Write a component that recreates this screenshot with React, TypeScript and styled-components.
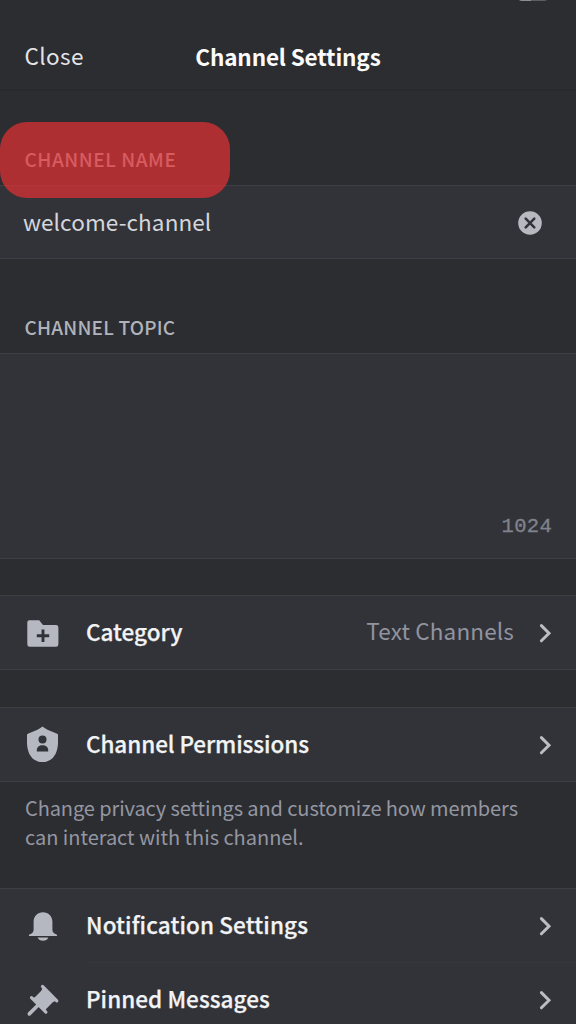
import React from 'react';
import styled, { createGlobalStyle } from 'styled-components';

const Global = createGlobalStyle`
  html, body { margin: 0; padding: 0; background: #2c2d31; }
  body { overflow: hidden; }
  * { box-sizing: border-box; }
`;

const Screen = styled.main`
  position: relative;
  width: 576px;
  height: 1024px;
  overflow: hidden;
  display: flex;
  flex-direction: column;
  background: #2c2d31;
  color: #f2f3f5;
  font-family: 'Noto Sans CJK SC', 'Noto Sans', sans-serif;
  font-size: 22px;
`;

const Header = styled.header`
  flex: none;
  height: 91px;
  padding: 38px 24px 0;
  display: grid;
  grid-template-columns: 1fr auto 1fr;
  align-items: start;
  border-bottom: 2px solid #28292c;
`;

const StatusPill = styled.div`
  position: absolute;
  top: -9px;
  left: 518px;
  width: 30px;
  height: 10px;
  border-radius: 4px;
  background: linear-gradient(90deg, #8d8e91 45%, #5d5e61 45%);
`;

const CloseButton = styled.button`
  all: unset;
  padding-left: 0.5px;
  margin-top: -1px;
  font-size: 22.5px;
  line-height: 36px;
  letter-spacing: 0.4px;
  color: #e3e4e8;
`;

const Title = styled.h1`
  margin: 0;
  font-size: 22.5px;
  font-weight: 700;
  letter-spacing: -0.15px;
  line-height: 36px;
  color: #fbfbfc;
`;

const SectionLabel = styled.h2<{ $height: number; $spacing?: number }>`
  flex: none;
  margin: 0;
  height: ${p => p.$height}px;
  padding: 0 24.5px 11px;
  display: flex;
  align-items: flex-end;
  font-size: 19px;
  line-height: 30px;
  font-weight: 500;
  letter-spacing: ${p => p.$spacing ?? 0}px;
  color: #b0b3bb;
`;

const Highlight = styled.div`
  position: absolute;
  left: 0;
  top: 122px;
  width: 230px;
  height: 76px;
  border-radius: 27px;
  background: rgba(235, 48, 51, 0.68);
`;

const Panel = styled.section<{ $height: number }>`
  flex: none;
  height: ${p => p.$height}px;
  background: #323338;
  border-top: 1px solid #3d3e43;
  border-bottom: 1px solid #3d3e43;
`;

const NameField = styled.div`
  display: flex;
  align-items: center;
  justify-content: space-between;
  height: 73px;
  padding: 0 34px 0 23px;
`;

const Value = styled.span`
  font-size: 22.5px;
  line-height: 34px;
  padding-bottom: 3px;
  letter-spacing: 0.1px;
  color: #d4d6dc;
`;

const Counter = styled.div`
  height: 100%;
  display: flex;
  align-items: flex-end;
  justify-content: flex-end;
  padding: 0 24px 18px;
  font-family: 'Liberation Mono', monospace;
  font-size: 20.5px;
  line-height: 26px;
  letter-spacing: 0.3px;
  color: #80838b;
  -webkit-text-stroke: 0.3px #80838b;
`;

const Gap = styled.div<{ $size: number }>`
  flex: none;
  height: ${p => p.$size}px;
`;

const RowBox = styled.div`
  height: 73px;
  padding: 0 24px 0 26px;
  display: grid;
  grid-template-columns: 34px 1fr auto 13px;
  align-items: center;
`;

const RowLabel = styled.span<{ $spacing: number }>`
  margin-left: 26px;
  padding-bottom: 4px;
  font-weight: 500;
  font-size: 22.5px;
  line-height: 34px;
  letter-spacing: ${p => p.$spacing}px;
  white-space: nowrap;
  -webkit-text-stroke: 0.25px currentColor;
`;

const RowValue = styled.span`
  margin-right: 25px;
  padding-bottom: 5px;
  font-size: 22.5px;
  line-height: 34px;
  letter-spacing: 0.15px;
  color: #9194a0;
`;

const Divider = styled.div`
  height: 1px;
  margin-left: 86px;
  background: #36373c;
`;

const Help = styled.p`
  flex: none;
  margin: 0;
  height: 106px;
  padding: 12px 25px 0;
  font-size: 20px;
  line-height: 28.5px;
  color: #9497a2;
  white-space: nowrap;
`;

const HelpLine = styled.span<{ $spacing: number }>`
  display: block;
  letter-spacing: ${p => p.$spacing}px;
`;

const FILL = '#b5b8c0';
const PANEL = '#323338';

const ClearIcon = () => (
  <svg width="24" height="24" viewBox="0 0 24 24">
    <circle cx="12" cy="12" r="11.8" fill="#b7b8c0" />
    <path d="M7.7 7.7l8.6 8.6M16.3 7.7l-8.6 8.6" stroke={PANEL} strokeWidth="2.5" strokeLinecap="round" />
  </svg>
);

const Chevron = () => (
  <svg width="13" height="20" viewBox="0 0 13 20">
    <path d="M2.4 2.6L10 10.2L2.4 17.8" fill="none" stroke="#bcbdc3" strokeWidth="3" strokeLinecap="round" />
  </svg>
);

const FolderIcon = () => (
  <svg width="34" height="36" viewBox="0 0 34 36">
    <path d="M3.3 4.5H13.2L17 9.2H30Q32.4 9.2 32.4 11.6V28.5Q32.4 31 30 31H3.7Q1.3 31 1.3 28.5V6.5Q1.3 4.5 3.3 4.5Z" transform="translate(0 0.8)" fill={FILL} />
    <path d="M17 14.6V27M10.8 20.8H23.2" stroke={PANEL} strokeWidth="2.9" />
  </svg>
);

const ShieldIcon = () => (
  <svg width="34" height="38" viewBox="0 0 34 38">
    <g transform="translate(0 -0.6)">
      <path d="M16.5 1.2Q18.2 2.8 21.5 4.3L31.2 8.3Q32 8.7 32 9.6V17C32 26.5 27.5 36.6 16.5 36.6S1 26.5 1 17V9.6Q1 8.7 1.8 8.3L11.5 4.3Q14.8 2.8 16.5 1.2Z" fill={FILL} />
      <circle cx="16.5" cy="14" r="4" fill={PANEL} />
      <path d="M10.8 26V24.6C10.8 21.5 13.3 19.8 16.5 19.8S22.2 21.5 22.2 24.6V26Z" fill={PANEL} />
    </g>
  </svg>
);

const BellIcon = () => (
  <svg width="34" height="34" viewBox="0 0 34 34">
    <path d="M17 3.2C22.4 3.2 26.4 7.2 26.4 12.6V21Q26.4 23.4 28.4 24.5L30.6 25.6Q31.4 26.2 31 27.1H3Q2.6 26.2 3.4 25.6L5.6 24.5Q7.6 23.4 7.6 21V12.6C7.6 7.2 11.6 3.2 17 3.2Z" fill={FILL} />
    <path d="M11.6 28.4H22.4Q20.9 31.7 17 31.7T11.6 28.4Z" fill={FILL} />
  </svg>
);

const PinIcon = () => (
  <svg width="34" height="34" viewBox="0 0 34 34">
    <g transform="translate(-0.5 -0.5)">
      <path d="M17 4L31.3 18.3" stroke={FILL} strokeWidth="3.2" strokeLinecap="round" />
      <path d="M6 15.2L20.4 29.6" stroke={FILL} strokeWidth="3.2" strokeLinecap="round" />
      <path d="M17.5 5L30.5 18L27 20L20.6 26.4L19.8 28.5L6.8 15.5L9.3 14.7L15.8 8.2Z" fill={FILL} />
      <path d="M14.5 20.8L3.8 31.4" stroke={FILL} strokeWidth="3.6" strokeLinecap="round" />
    </g>
  </svg>
);

interface RowProps {
  icon: React.ReactNode;
  label: string;
  value?: string;
  spacing?: number;
}

const Row = ({ icon, label, value, spacing = 0 }: RowProps) => (
  <RowBox>
    {icon}
    <RowLabel $spacing={spacing}>{label}</RowLabel>
    {value ? <RowValue>{value}</RowValue> : <span />}
    <Chevron />
  </RowBox>
);

export default function App() {
  return (
    <Screen>
      <Global />
      <StatusPill />
      <Header>
        <CloseButton>Close</CloseButton>
        <Title>Channel Settings</Title>
      </Header>
      <SectionLabel $height={94} $spacing={0.55}>CHANNEL NAME</SectionLabel>
      <Panel $height={74}>
        <NameField>
          <Value>welcome-channel</Value>
          <ClearIcon />
        </NameField>
      </Panel>
      <SectionLabel $height={94} $spacing={0.2}>CHANNEL TOPIC</SectionLabel>
      <Panel $height={206}>
        <Counter>1024</Counter>
      </Panel>
      <Gap $size={36} />
      <Panel $height={75}>
        <Row icon={<FolderIcon />} label="Category" value="Text Channels" />
      </Panel>
      <Gap $size={37} />
      <Panel $height={75}>
        <Row icon={<ShieldIcon />} label="Channel Permissions" spacing={-0.08} />
      </Panel>
      <Help>
        <HelpLine $spacing={-0.1}>Change privacy settings and customize how members</HelpLine>
        <HelpLine $spacing={-0.03}>can interact with this channel.</HelpLine>
      </Help>
      <Panel $height={160}>
        <Row icon={<BellIcon />} label="Notification Settings" spacing={0.12} />
        <Divider />
        <Row icon={<PinIcon />} label="Pinned Messages" spacing={0.04} />
      </Panel>
      <Highlight />
    </Screen>
  );
}
